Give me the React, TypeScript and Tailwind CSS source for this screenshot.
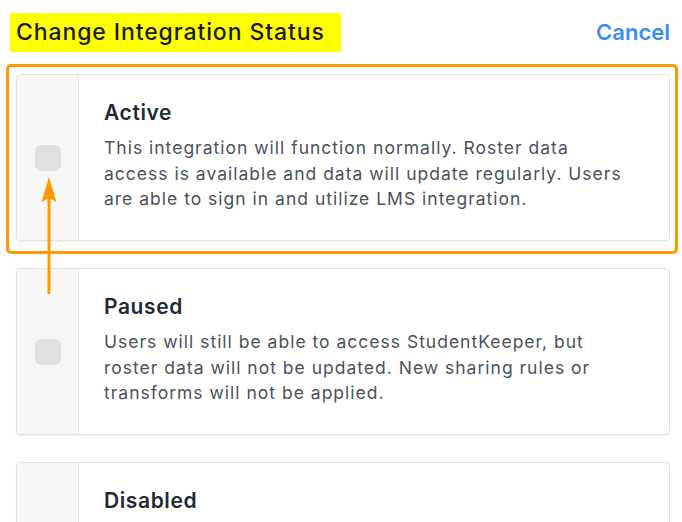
import React from "react";

type Opt = { title: string; desc: string };

const options: Opt[] = [
  {
    title: "Active",
    desc: "This integration will function normally. Roster data access is available and data will update regularly. Users are able to sign in and utilize LMS integration.",
  },
  {
    title: "Paused",
    desc: "Users will still be able to access StudentKeeper, but roster data will not be updated. New sharing rules or transforms will not be applied.",
  },
  {
    title: "Disabled",
    desc: "This integration will not function. Roster data will not be updated and users will not be able to sign in.",
  },
];

function Card({ o }: { o: Opt }) {
  return (
    <div className="flex bg-white border border-[#e2e2e2] rounded-[4px] shadow-[0_1px_2px_rgba(0,0,0,0.06)] min-h-[167px]">
      <div className="w-[62px] shrink-0 bg-[#f7f7f7] border-r border-[#e2e2e2] rounded-l-[4px] flex justify-center">
        <div className="mt-[70px] w-[26px] h-[26px] rounded-[6px] bg-[#e0e0e0]" />
      </div>
      <div className="flex-1 pl-[25px] pr-[36px] pt-[26px] pb-[28px]">
        <div className="text-[21px] leading-[24px] font-semibold tracking-[0.6px] text-[#1f2a37]">{o.title}</div>
        <p className="mt-[10px] text-[17.5px] leading-[25.5px] tracking-[1px] text-[#4a525e]">{o.desc}</p>
      </div>
    </div>
  );
}

export default function App() {
  return (
    <div
      className="relative w-[682px] h-[522px] overflow-hidden bg-white"
      style={{ fontFamily: "Inter, 'Noto Sans', sans-serif" }}
    >
      <div className="flex items-center justify-between pl-[10px] pr-[12px] pt-[13px]">
        <span className="bg-[#ffff00] h-[39px] px-[6px] pr-[16px] flex items-center text-[23px] font-medium tracking-[0.9px] text-[#1a1a1a]">
          Change Integration Status
        </span>
        <button className="text-[22px] font-semibold text-[#3a8ef6]">Cancel</button>
      </div>
      <div className="mt-[22px] pl-4 pr-[12px] flex flex-col gap-[27px]">
        {options.map((o) => (
          <Card key={o.title} o={o} />
        ))}
      </div>
      {/* annotation: orange highlight box */}
      <div className="absolute left-[6px] top-[64px] w-[672px] h-[190px] border-[3px] border-[#ff9900] rounded-[5px] pointer-events-none" />
      {/* annotation: arrow */}
      <svg className="absolute left-[38px] top-[176px] pointer-events-none" width="22" height="120" viewBox="0 0 22 120">
        <line x1="11" y1="20" x2="11" y2="118" stroke="#ff9900" strokeWidth="3" />
        <path d="M11 1 L18.5 26 L11 22 L3.5 26 Z" fill="#ff9900" />
      </svg>
    </div>
  );
}
